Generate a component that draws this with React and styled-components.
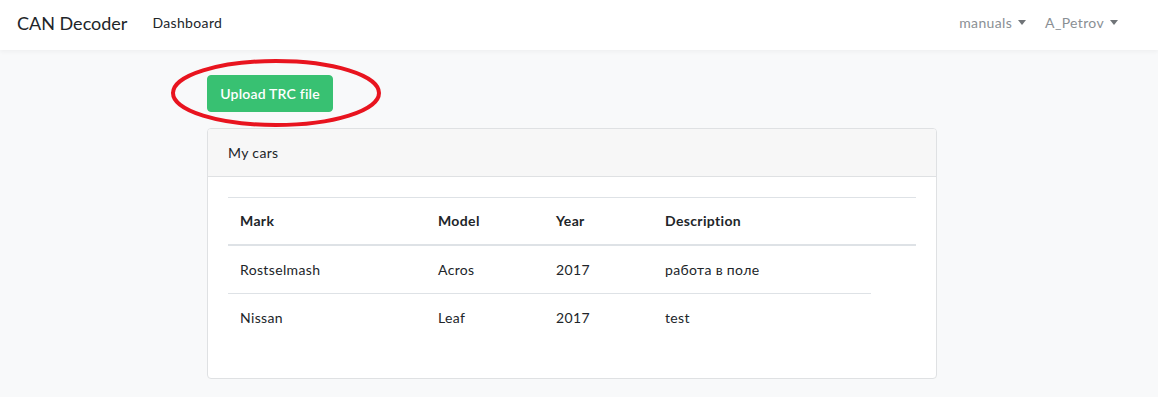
import React from "react";
import styled, { createGlobalStyle } from "styled-components";

const GlobalStyle = createGlobalStyle`
  html, body {
    margin: 0;
    padding: 0;
    background: #f8f9fa;
    font-family: Lato, "Noto Sans", sans-serif;
    font-size: 14px;
    letter-spacing: 0.35px;
    color: #212529;
  }
  * { box-sizing: border-box; }
`;

const cars = [
  { mark: "Rostselmash", model: "Acros", year: 2017, description: "работа в поле" },
  { mark: "Nissan", model: "Leaf", year: 2017, description: "test" },
];

const Navbar = styled.nav`
  height: 50px;
  background: #fff;
  box-shadow: 0 2px 4px rgba(0, 0, 0, 0.04);
  display: flex;
  align-items: center;
  padding: 0 17px 5px;
`;

const Brand = styled.div`
  font-size: 18px;
  letter-spacing: 0;
  color: #212529;
  margin-right: 17px;
`;

const NavLink = styled.div`
  font-size: 14px;
  color: ${(p) => (p.$muted ? "#8a8f94" : "#212529")};
  display: flex;
  align-items: center;
  gap: 6px;
  padding: 0 8px;
`;

const Caret = styled.span`
  width: 0;
  height: 0;
  border-left: 4.5px solid transparent;
  border-right: 4.5px solid transparent;
  border-top: 5px solid #707478;
`;

const Spacer = styled.div`
  flex: 1;
`;

const RightNav = styled.div`
  display: flex;
  align-items: center;
  gap: 3px;
  margin-right: 15px;
`;

const Main = styled.main`
  width: 730px;
  margin-left: 207px;
  padding: 25px 0 12px;
`;

const UploadWrap = styled.div`
  position: relative;
  display: inline-block;
  margin-bottom: 16px;
`;

const Button = styled.button`
  background: #38c172;
  color: #fff;
  border: 1px solid #38c172;
  border-radius: 4px;
  font-family: inherit;
  font-size: 14px;
  letter-spacing: 0.2px;
  font-weight: 600;
  height: 37px;
  padding: 0 8px;
  width: 126px;
`;

const Ellipse = styled.svg`
  position: absolute;
  left: -37px;
  top: -20px;
  overflow: visible;
  pointer-events: none;
`;

const Card = styled.section`
  background: #fff;
  border: 1px solid #dfe1e3;
  border-radius: 4px;
  overflow: hidden;
`;

const CardHeader = styled.div`
  height: 48px;
  background: #f7f7f7;
  border-bottom: 1px solid #dfe1e3;
  display: flex;
  align-items: center;
  padding: 0 20px;
  color: #212529;
`;

const CardBody = styled.div`
  padding: 20px;
`;

const Table = styled.div`
  margin-bottom: 16px;
`;

const Row = styled.div`
  display: grid;
  grid-template-columns: 198px 118px 109px 1fr;
  width: ${(p) => (p.$narrow ? "643px" : "100%")};
  border-top: ${(p) => (p.$head ? "1px solid #dee2e6" : "none")};
  border-bottom: ${(p) =>
    p.$head ? "2px solid #dee2e6" : p.$last ? "none" : "1px solid #dee2e6"};
  height: ${(p) => (p.$head ? "49px" : "48px")};
`;

const Cell = styled.div`
  padding: 0 12px;
  display: flex;
  align-items: center;
  padding-bottom: ${(p) => (p.$head ? "2px" : "1px")};
  font-weight: ${(p) => (p.$head ? 700 : 400)};
  color: #212529;
`;

export default function App() {
  return (
    <>
      <GlobalStyle />
      <Navbar>
        <Brand>CAN Decoder</Brand>
        <NavLink>Dashboard</NavLink>
        <Spacer />
        <RightNav>
          <NavLink $muted>
            manuals <Caret />
          </NavLink>
          <NavLink $muted>
            A_Petrov <Caret />
          </NavLink>
        </RightNav>
      </Navbar>
      <Main>
        <UploadWrap>
          <Button>Upload TRC file</Button>
          <Ellipse width="210" height="72" viewBox="0 0 210 72">
            <ellipse cx="106" cy="38" rx="103" ry="32" fill="none" stroke="#e8141f" strokeWidth="4" />
          </Ellipse>
        </UploadWrap>
        <Card>
          <CardHeader>My cars</CardHeader>
          <CardBody>
            <Table>
              <Row $head>
                <Cell $head>Mark</Cell>
                <Cell $head>Model</Cell>
                <Cell $head>Year</Cell>
                <Cell $head>Description</Cell>
              </Row>
              {cars.map((car, i) => (
                <Row key={car.mark} $narrow $last={i === cars.length - 1}>
                  <Cell>{car.mark}</Cell>
                  <Cell>{car.model}</Cell>
                  <Cell>{car.year}</Cell>
                  <Cell>{car.description}</Cell>
                </Row>
              ))}
            </Table>
          </CardBody>
        </Card>
      </Main>
    </>
  );
}
